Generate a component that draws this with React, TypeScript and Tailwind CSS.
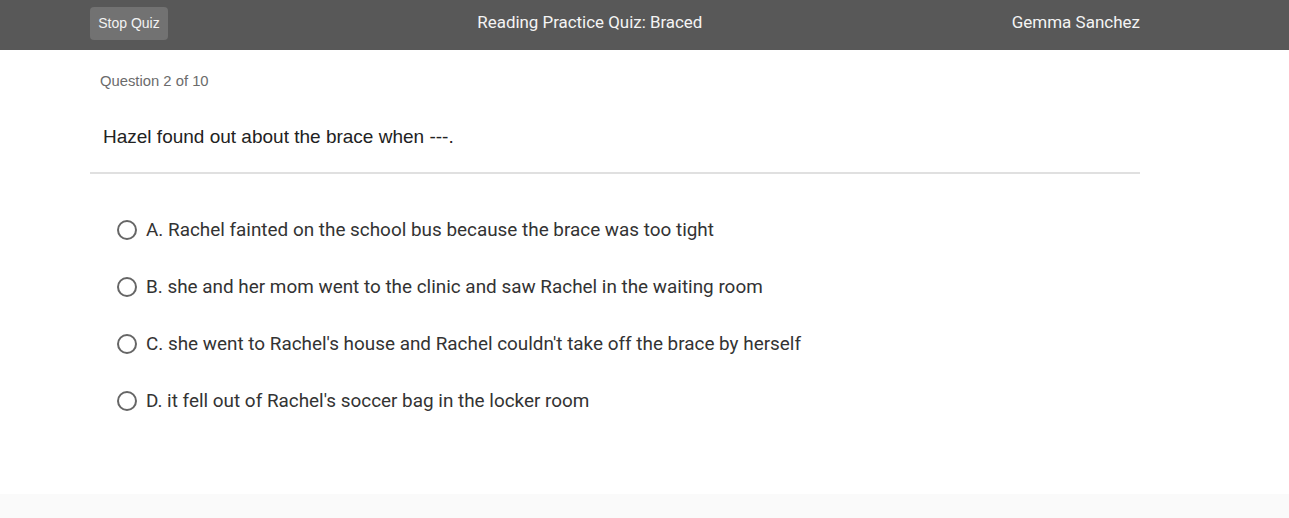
const options = [
  "A. Rachel fainted on the school bus because the brace was too tight",
  "B. she and her mom went to the clinic and saw Rachel in the waiting room",
  "C. she went to Rachel's house and Rachel couldn't take off the brace by herself",
  "D. it fell out of Rachel's soccer bag in the locker room",
];

export default function App() {
  return (
    <div className="flex min-h-[518px] flex-col bg-white">
      <header className="h-[50px] bg-[#585858]">
        <div className="ml-[90px] flex h-full w-[1050px] items-start justify-between">
          <div className="pt-[7px]">
            <button className="h-[33px] w-[78px] rounded-[4px] bg-[#727272] font-['Liberation_Sans',Arial,sans-serif] text-[14px] text-[#f2f2f2]">
              Stop Quiz
            </button>
          </div>
          <h1 className="pt-[12px] font-['Roboto',sans-serif] text-[16.9px] leading-[21px] text-[#f4f4f4]">
            Reading Practice Quiz: Braced
          </h1>
          <div className="pt-[12px] text-right font-['Roboto',sans-serif] text-[17px] leading-[21px] text-[#f4f4f4]">
            Gemma Sanchez
          </div>
        </div>
      </header>

      <main className="ml-[90px] w-[1050px] flex-1">
        <p className="pl-[10px] pt-[22px] font-['Liberation_Sans',Arial,sans-serif] text-[14.8px] leading-[18px] text-[#6b6b6b]">
          Question 2 of 10
        </p>
        <p className="pl-[13px] pt-[34px] pb-[22px] font-['Liberation_Sans',Arial,sans-serif] text-[19px] leading-[26px] text-[#222]">
          Hazel found out about the brace when ---.
        </p>
        <div className="h-[2px] bg-[#e0e0e0]" />
        <ul className="flex flex-col gap-[35px] pl-[27px] pt-[45px]">
          {options.map((o) => (
            <li key={o} className="flex h-[22px] items-center gap-[9px]">
              <span className="h-[20px] w-[20px] shrink-0 rounded-full border-2 border-[#666]" />
              <span className="font-['Roboto',sans-serif] text-[18.9px] leading-[22px] text-[#333]">
                {o}
              </span>
            </li>
          ))}
        </ul>
      </main>

      <footer className="h-[24px] bg-[#fafafa]" />
    </div>
  );
}
